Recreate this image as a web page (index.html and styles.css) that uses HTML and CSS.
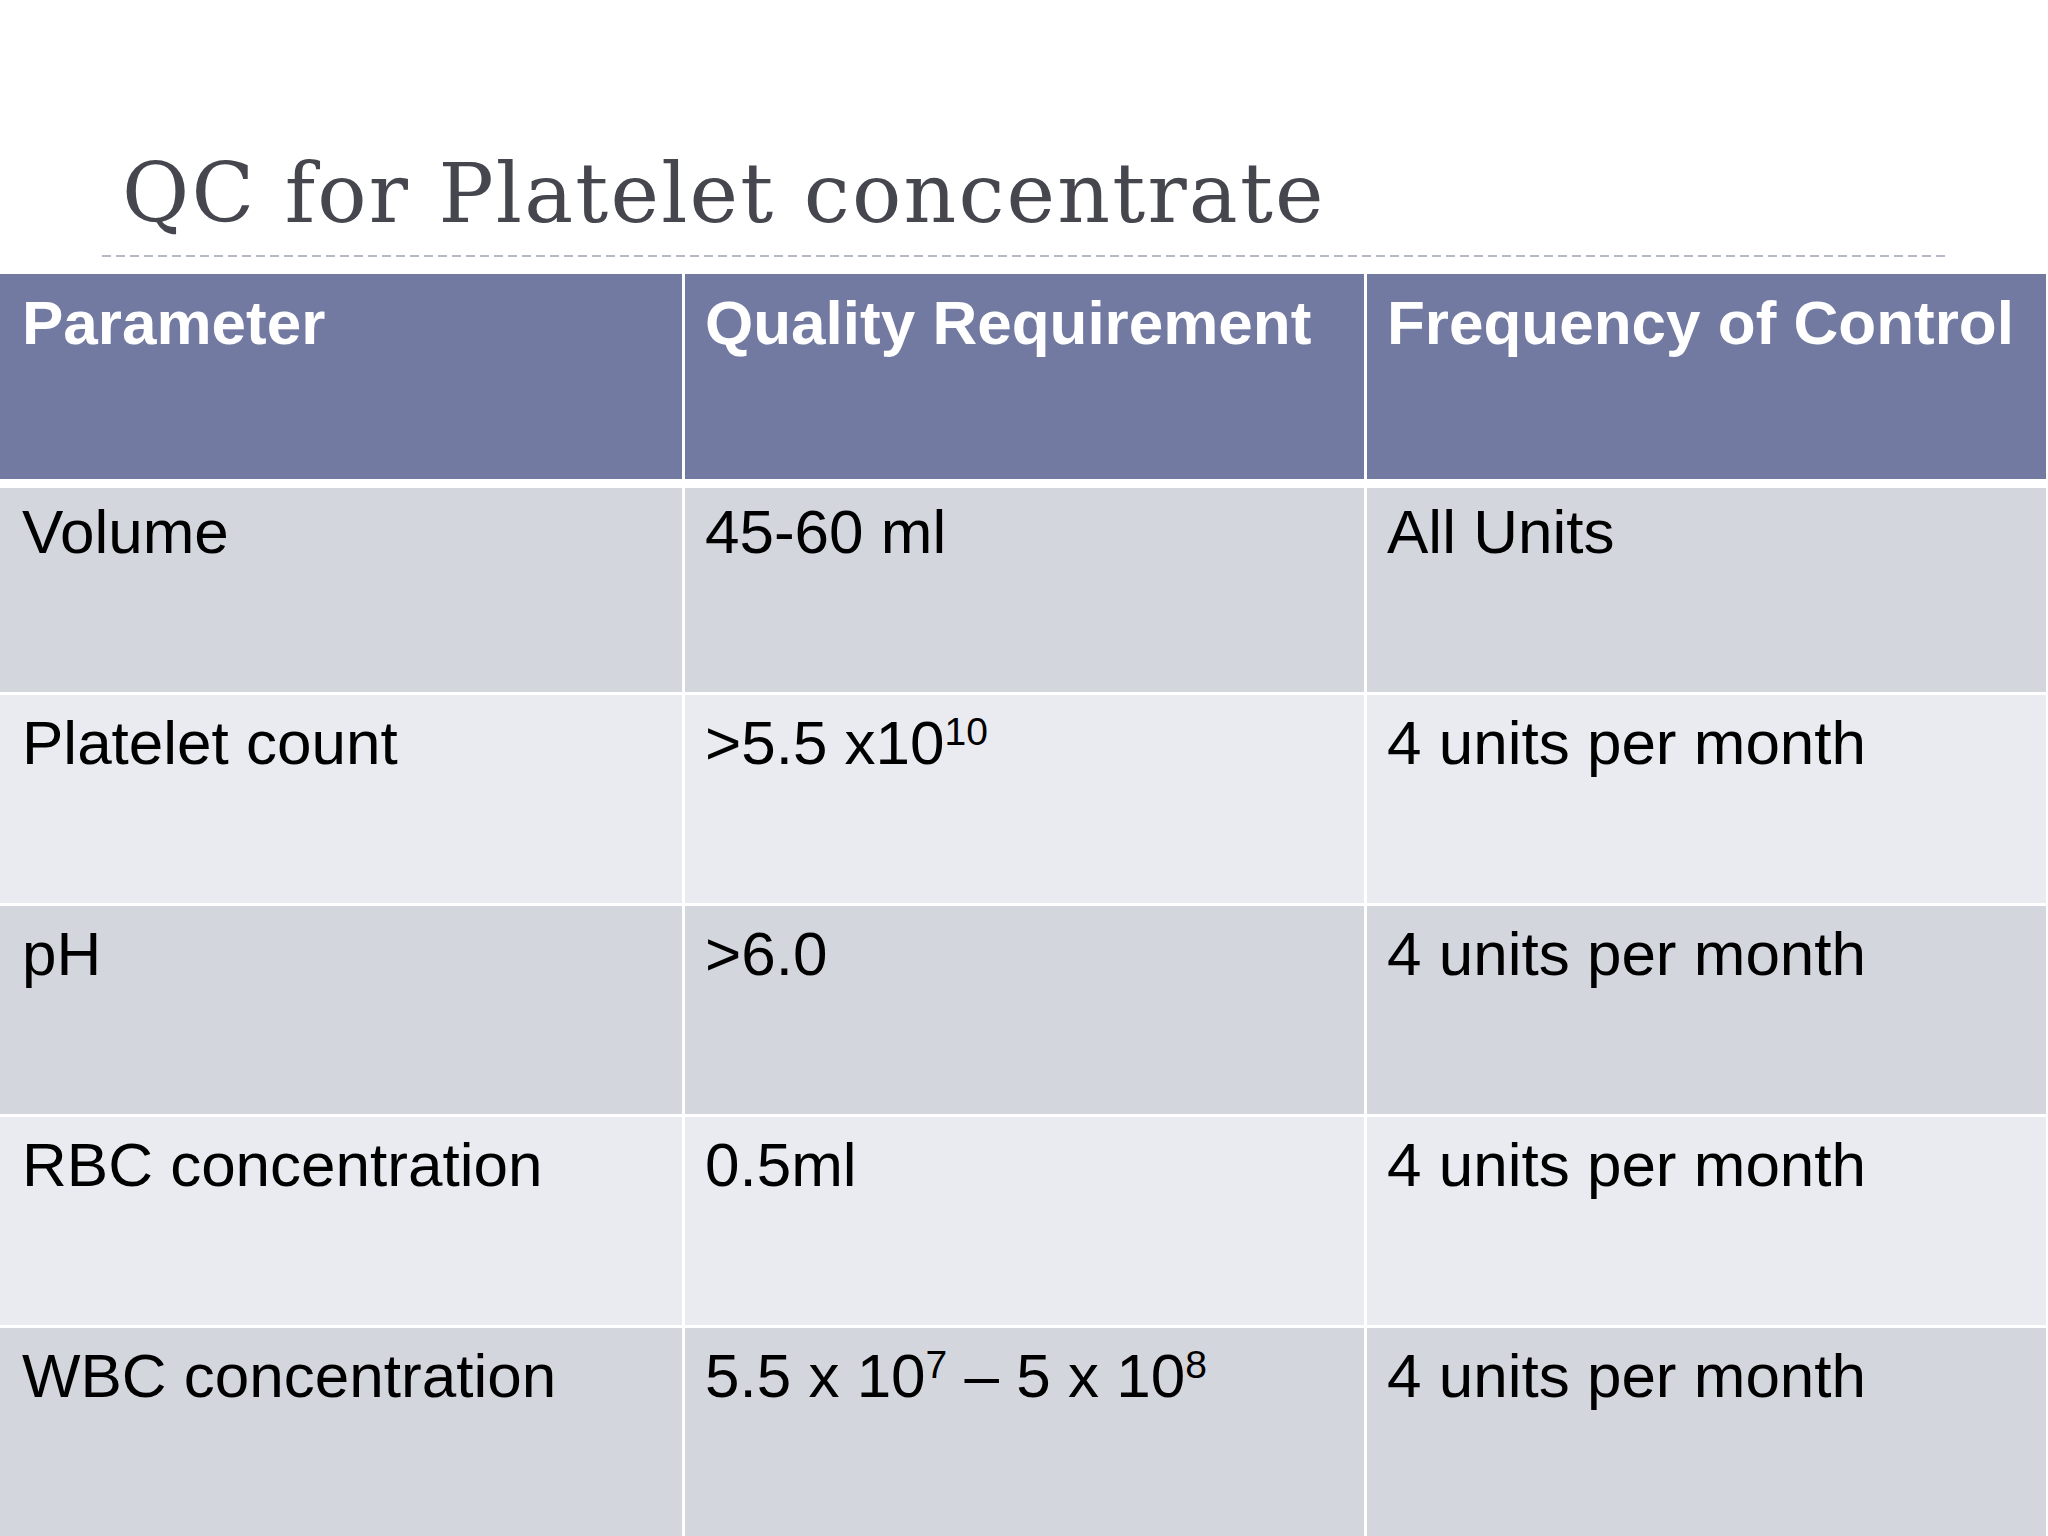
FILE: index.html
```html
<!DOCTYPE html>
<html lang="en">
<head>
<meta charset="utf-8">
<title>QC for Platelet concentrate</title>
<link rel="stylesheet" href="styles.css">
</head>
<body>
<div class="slide">
  <header class="slide-head">
    <h1 class="title">QC for Platelet concentrate</h1>
    <div class="rule"></div>
  </header>
  <div class="qc-table">
    <div class="cell head">Parameter</div>
    <div class="cell head">Quality Requirement</div>
    <div class="cell head">Frequency of Control</div>

    <div class="cell odd first">Volume</div>
    <div class="cell odd first">45-60 ml</div>
    <div class="cell odd first">All Units</div>

    <div class="cell even">Platelet count</div>
    <div class="cell even">&gt;5.5 x10<sup>10</sup></div>
    <div class="cell even">4 units per month</div>

    <div class="cell odd">pH</div>
    <div class="cell odd">&gt;6.0</div>
    <div class="cell odd">4 units per month</div>

    <div class="cell even">RBC concentration</div>
    <div class="cell even">0.5ml</div>
    <div class="cell even">4 units per month</div>

    <div class="cell odd">WBC concentration</div>
    <div class="cell odd">5.5 x 10<sup>7</sup> – 5 x 10<sup>8</sup></div>
    <div class="cell odd">4 units per month</div>
  </div>
</div>
</body>
</html>
```

FILE: styles.css
```css
html, body {
  margin: 0;
  padding: 0;
  background: #ffffff;
}

.slide {
  width: 2048px;
  height: 1536px;
  overflow: hidden;
  background: #ffffff;
}

.slide-head {
  height: 274px;
  box-sizing: border-box;
  padding: 153px 102px 0 102px;
}

.title {
  margin: 0;
  padding-left: 20px;
  font-family: "DejaVu Serif", "Liberation Serif", serif;
  font-weight: normal;
  font-size: 82px;
  line-height: 82px;
  letter-spacing: 2.2px;
  color: #46464f;
  white-space: nowrap;
}

.rule {
  margin-top: 20px;
  height: 2px;
  background: repeating-linear-gradient(to right, #b4b9c6 0, #b4b9c6 9px, transparent 9px, transparent 14px);
}

.qc-table {
  display: grid;
  width: 2046px;
  grid-template-columns: 682px 679px 679px;
  grid-template-rows: 211px 204px 208px 208px 208px 208px;
  column-gap: 3px;
  row-gap: 3px;
  background: #ffffff;
}

.cell {
  box-sizing: border-box;
  padding: 12px 18px 0 22px;
  font-family: "Liberation Sans", Arial, sans-serif;
  font-size: 62px;
  line-height: 72px;
  color: #000000;
  white-space: nowrap;
}

.cell:not(:nth-child(3n+1)) {
  padding-left: 20px;
}

.head {
  background: #737aa2;
  border-bottom: 6px solid #ffffff;
  color: #ffffff;
  font-weight: bold;
  font-size: 62px;
  padding-top: 13px;
}

.odd {
  background: #d4d6de;
}

.even {
  background: #e9ebf0;
}

.first {
  padding-top: 8px;
}

sup {
  font-size: 0.63em;
  line-height: 0;
  vertical-align: 0.48em;
}
```
